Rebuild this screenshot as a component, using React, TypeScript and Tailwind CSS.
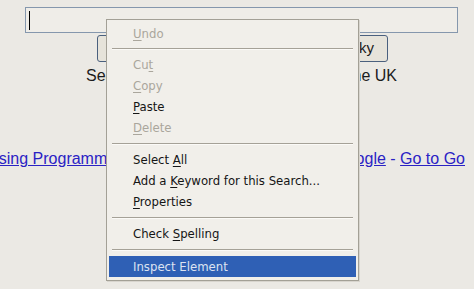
const menuFont = "font-['DejaVu_Sans_Condensed','Liberation_Sans',sans-serif]";

function Item({ children, disabled = false, active = false }: { children: React.ReactNode; disabled?: boolean; active?: boolean }) {
  let cls = 'text-[#151515]';
  if (disabled) cls = 'text-[#aaa69c]';
  if (active) cls = 'bg-[#2f60b5] text-[#dde3f1]';
  return (
    <div className={`h-[21px] pl-[24px] flex items-center text-[13px] leading-none whitespace-nowrap ${cls}`}>
      <span>{children}</span>
    </div>
  );
}

function Sep({ h }: { h: string }) {
  return (
    <div className={`${h} flex flex-col justify-center px-[3px]`}>
      <div className="h-px bg-[#a5a197]" />
      <div className="h-px bg-[#fbfaf7]" />
    </div>
  );
}

function U({ children }: { children: React.ReactNode }) {
  return <span className="underline underline-offset-2">{children}</span>;
}

export default function App() {
  return (
    <div className="relative w-[474px] h-[289px] overflow-hidden bg-[#ebe9e4] font-['Liberation_Sans',Arial,sans-serif] text-[#1c1c1c]">
      <div className="pt-[7px]">
        <div className="ml-[25px] w-[433px] h-[26px] border border-[#8597ad] bg-[#efede8] flex items-center pl-[3px]">
          <div className="w-px h-[19px] bg-black" />
        </div>

        <div className="mt-[2px] ml-[97px] w-[291px] h-[27px] flex justify-between">
          <button className="h-full px-[13px] border border-[#4a607e] rounded-[3px] bg-[#e6e3da] text-[15px]">Google Search</button>
          <button className="h-full px-[13px] border border-[#4a607e] rounded-[3px] bg-[#e6e3da] text-[15px]">I'm Feeling Lucky</button>
        </div>

        <div className="mt-[5px] ml-[86px] w-[311px] flex justify-between text-[16px] leading-[18px]">
          <span>Search:</span>
          <span>pages from the UK</span>
        </div>

        <div className="mt-[65px] flex items-center text-[16px] leading-[18px] whitespace-nowrap">
          <a className="ml-[-51px] text-[#2a22c4] underline">Advertising Programmes</a>
          <div className="flex-1" />
          <span className="mr-[9px]">
            <a className="text-[#2a22c4] underline">About Google</a>
            <span className="text-[#2a22c4]"> - </span>
            <a className="text-[#2a22c4] underline">Go to Go</a>
          </span>
        </div>
      </div>

      <div className={`absolute left-[106px] top-[19px] w-[253px] border border-[#a3a096] bg-[#f1efea] px-[2px] py-[3px] shadow-[1px_1px_0_#d8d5ce] ${menuFont}`}>
        <Item disabled><U>U</U>ndo</Item>
        <Sep h="h-[10px]" />
        <Item disabled>Cu<U>t</U></Item>
        <Item disabled><U>C</U>opy</Item>
        <Item><U>P</U>aste</Item>
        <Item disabled><U>D</U>elete</Item>
        <Sep h="h-[11px]" />
        <Item>Select <U>A</U>ll</Item>
        <Item>Add a <U>K</U>eyword for this Search...</Item>
        <Item><U>P</U>roperties</Item>
        <Sep h="h-[11px]" />
        <Item>Check <U>S</U>pelling</Item>
        <Sep h="h-[12px]" />
        <Item active>Inspect Element</Item>
      </div>
    </div>
  );
}
